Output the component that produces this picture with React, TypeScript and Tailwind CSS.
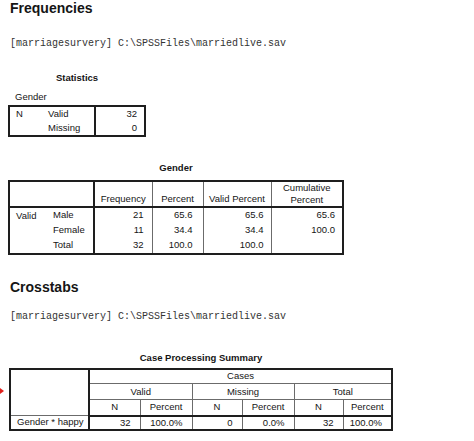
const thin = "border-[#6b6b6b]";

function MonoPath() {
	return (
		<p className="ml-[2px] font-['Liberation_Mono',monospace] text-[10px] leading-[12px] text-[#333]">
			[marriagesurvery] C:\SPSSFiles\marriedlive.sav
		</p>
	);
}

function StatisticsTable() {
	return (
		<div className="w-fit">
			<p className="text-center font-bold leading-[12px]">Statistics</p>
			<p className="mt-[7px] ml-[7px] leading-[12px]">Gender</p>
			<table className="mt-[2px] table-fixed border-collapse border-2 border-[#1e1e1e] leading-[12px]">
				<colgroup>
					<col className="w-[39px]" />
					<col className="w-[47px]" />
					<col className="w-[50px]" />
				</colgroup>
				<tbody>
					<tr className="h-[15px]">
						<td className="pl-[6px]">N</td>
						<td>Valid</td>
						<td className="border-l-2 border-[#1e1e1e] pr-[7px] text-right">32</td>
					</tr>
					<tr className="h-[15px]">
						<td></td>
						<td>Missing</td>
						<td className="border-l-2 border-[#1e1e1e] pr-[7px] text-right">0</td>
					</tr>
				</tbody>
			</table>
		</div>
	);
}

const genderRows = [
	["Male", "21", "65.6", "65.6", "65.6"],
	["Female", "11", "34.4", "34.4", "100.0"],
	["Total", "32", "100.0", "100.0", ""],
];

function GenderTable() {
	return (
		<div className="w-fit">
			<p className="text-center font-bold leading-[12px]">Gender</p>
			<table className="mt-[6px] table-fixed border-collapse border-2 border-[#1e1e1e] leading-[12px]">
				<colgroup>
					<col className="w-[40px]" />
					<col className="w-[45px]" />
					<col className="w-[58px]" />
					<col className="w-[51px]" />
					<col className="w-[68px]" />
					<col className="w-[72px]" />
				</colgroup>
				<thead>
					<tr className="h-[26px]">
						<th colSpan={2} className="border-b-2 border-[#1e1e1e]"></th>
						<th className="border-l-2 border-b-2 border-l-[#1e1e1e] border-b-[#1e1e1e] pb-[1px] align-bottom font-normal">
							Frequency
						</th>
						<th className={`border-l border-b-2 ${thin} border-b-[#1e1e1e] pb-[1px] align-bottom font-normal`}>
							Percent
						</th>
						<th className={`border-l border-b-2 ${thin} border-b-[#1e1e1e] pb-[1px] align-bottom font-normal`}>
							Valid Percent
						</th>
						<th className={`border-l border-b-2 ${thin} border-b-[#1e1e1e] pb-[1px] align-bottom font-normal leading-[11.5px]`}>
							Cumulative
							<br />
							Percent
						</th>
					</tr>
				</thead>
				<tbody>
					{genderRows.map((row, i) => (
						<tr key={row[0]} className="h-[15.5px]">
							{i === 0 && (
								<td rowSpan={3} className="pl-[6px] align-top pt-[1.5px]">
									Valid
								</td>
							)}
							<td className="pl-[4px]">{row[0]}</td>
							<td className="border-l-2 border-[#1e1e1e] pr-[8px] text-right">{row[1]}</td>
							<td className={`border-l ${thin} pr-[10px] text-right`}>{row[2]}</td>
							<td className={`border-l ${thin} pr-[7px] text-right`}>{row[3]}</td>
							<td className={`border-l ${thin} pr-[7px] text-right`}>{row[4]}</td>
						</tr>
					))}
				</tbody>
			</table>
		</div>
	);
}

function CaseSummaryTable() {
	const sub = ["Valid", "Missing", "Total"];
	const data = ["32", "100.0%", "0", "0.0%", "32", "100.0%"];
	return (
		<div className="w-fit">
			<p className="text-center font-bold leading-[12px]">Case Processing Summary</p>
			<table className="mt-[4px] table-fixed border-collapse border-2 border-[#1e1e1e] leading-[12px]">
				<colgroup>
					<col className="w-[79px]" />
					<col className="w-[51px]" />
					<col className="w-[52px]" />
					<col className="w-[50px]" />
					<col className="w-[52px]" />
					<col className="w-[49px]" />
					<col className="w-[49px]" />
				</colgroup>
				<thead>
					<tr className="h-[15px]">
						<th rowSpan={3} className="border-r-2 border-b border-[#1e1e1e] border-b-[#6b6b6b]"></th>
						<th colSpan={6} className={`border-b ${thin} font-normal`}>
							Cases
						</th>
					</tr>
					<tr className="h-[16px]">
						{sub.map((s, i) => (
							<th
								key={s}
								colSpan={2}
								className={`border-b ${thin} ${i > 0 ? "border-l" : ""} font-normal`}
							>
								{s}
							</th>
						))}
					</tr>
					<tr className="h-[16px]">
						{sub.flatMap((s) => [
							<th key={s + "n"} className={`border-b-2 border-b-[#1e1e1e] border-l ${thin} font-normal`}>
								N
							</th>,
							<th key={s + "p"} className={`border-b-2 border-b-[#1e1e1e] border-l ${thin} font-normal`}>
								Percent
							</th>,
						])}
					</tr>
				</thead>
				<tbody>
					<tr className="h-[14px]">
						<td className="border-r-2 border-[#1e1e1e] pl-[6px] whitespace-nowrap">Gender * happy</td>
						{data.map((d, i) => (
							<td key={i} className={`${i > 0 ? `border-l ${thin}` : ""} pr-[9px] text-right`}>
								{d}
							</td>
						))}
					</tr>
				</tbody>
			</table>
		</div>
	);
}

function App() {
	return (
		<div className="relative h-[441px] w-[474px] overflow-hidden bg-white pl-[8px] font-['Liberation_Sans',Arial,sans-serif] text-[9.5px] text-[#151515]">
			<h1 className="ml-[2px] text-[14px] font-bold leading-[16px]">Frequencies</h1>
			<div className="mt-[22px]">
				<MonoPath />
			</div>
			<div className="mt-[22px]">
				<StatisticsTable />
			</div>
			<div className="mt-[25px]">
				<GenderTable />
			</div>
			<h1 className="mt-[24px] ml-[2px] text-[14px] font-bold leading-[16px]">Crosstabs</h1>
			<div className="mt-[16px]">
				<MonoPath />
			</div>
			<div className="mt-[29px] ml-[1px]">
				<CaseSummaryTable />
			</div>
			<svg className="absolute left-0 top-[388px]" width="4" height="6" viewBox="0 0 4 6">
				<path d="M0 0 L4 3 L0 6 Z" fill="#e0201c" />
			</svg>
		</div>
	);
}

export default App;
